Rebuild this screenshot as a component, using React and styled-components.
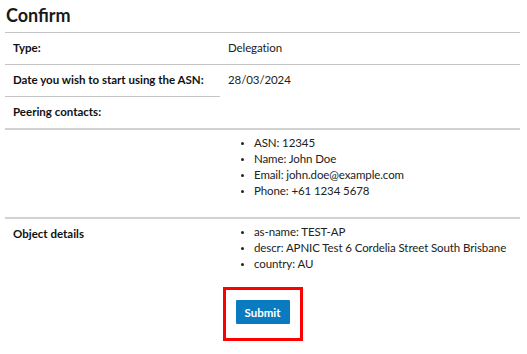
import React from "react";
import styled, { createGlobalStyle } from "styled-components";

const GlobalStyle = createGlobalStyle`
  * { box-sizing: border-box; }
  body {
    margin: 0;
    background: #ffffff;
    font-family: Lato, "Open Sans", sans-serif;
    color: #222222;
  }
`;

const rows = [
  { label: "Type:", value: "Delegation" },
  { label: "Date you wish to start using the ASN:", value: "28/03/2024", labelLine: true, noLine: true },
  { label: "Peering contacts:", value: null, thick: true },
  {
    label: "",
    list: ["ASN: 12345", "Name: John Doe", "Email: john.doe@example.com", "Phone: +61 1234 5678"],
    thick: true,
    gap: true,
  },
  {
    label: "Object details",
    list: ["as-name: TEST-AP", "descr: APNIC Test 6 Cordelia Street South Brisbane", "country: AU"],
    noLine: true,
  },
];

function App() {
  return (
    <>
      <GlobalStyle />
      <Page>
        <Title>Confirm</Title>
        <Table>
          <tbody>
            {rows.map((row, i) => (
              <Row key={i} $thick={row.thick} $noLine={row.noLine}>
                <Label $line={row.labelLine}>{row.label}</Label>
                <Value $tight={!!row.list}>
                  {row.list ? (
                    <List $gap={row.gap}>
                      {row.list.map((item) => (
                        <Item key={item}>{item}</Item>
                      ))}
                    </List>
                  ) : (
                    row.value
                  )}
                </Value>
              </Row>
            ))}
          </tbody>
        </Table>
        <Actions>
          <Highlight>
            <Submit>Submit</Submit>
          </Highlight>
        </Actions>
      </Page>
    </>
  );
}

export default App;

const Page = styled.div`
  width: 527px;
  padding: 0 7px 0 5px;
`;

const Title = styled.h1`
  margin: 0;
  padding: 4px 0 0 1px;
  height: 32px;
  font-size: 18px;
  line-height: 22px;
  font-weight: 700;
  color: #1a1a1a;
`;

const Table = styled.table`
  width: 515px;
  border-collapse: collapse;
  border-top: 1px solid #c4c4c4;
  font-size: 11.5px;
`;

const Row = styled.tr`
  border-bottom: ${(p) => (p.$noLine ? "none" : p.$thick ? "2px solid #d2d2d2" : "1px solid #c4c4c4")};
`;

const Label = styled.td`
  width: 215px;
  padding: 7px 8px 8px 8px;
  vertical-align: top;
  white-space: nowrap;
  font-weight: 700;
  line-height: 16px;
  color: #111111;
  border-bottom: ${(p) => (p.$line ? "1px solid #c4c4c4" : "none")};
`;

const Value = styled.td`
  padding: ${(p) => (p.$tight ? "5px" : "7px")} 8px 8px 8px;
  vertical-align: top;
  line-height: 16px;
  color: #222222;
  letter-spacing: -0.1px;
`;

const List = styled.ul`
  margin: 0 0 ${(p) => (p.$gap ? "10px" : "0")};
  padding-left: 26px;
  list-style: disc;
`;

const Item = styled.li`
  &::marker {
    font-size: 9px;
  }
`;

const Actions = styled.div`
  display: flex;
  justify-content: center;
  padding-top: 7px;
`;

const Highlight = styled.div`
  border: 3px solid #ff0000;
  padding: 10px 10px 14px 10px;
`;

const Submit = styled.button`
  width: 54px;
  height: 24px;
  border: none;
  border-radius: 1px;
  background-color: #0a7bc0;
  color: #ffffff;
  font-family: Lato, "Open Sans", sans-serif;
  font-size: 11.5px;
  font-weight: 700;
  cursor: pointer;
`;
